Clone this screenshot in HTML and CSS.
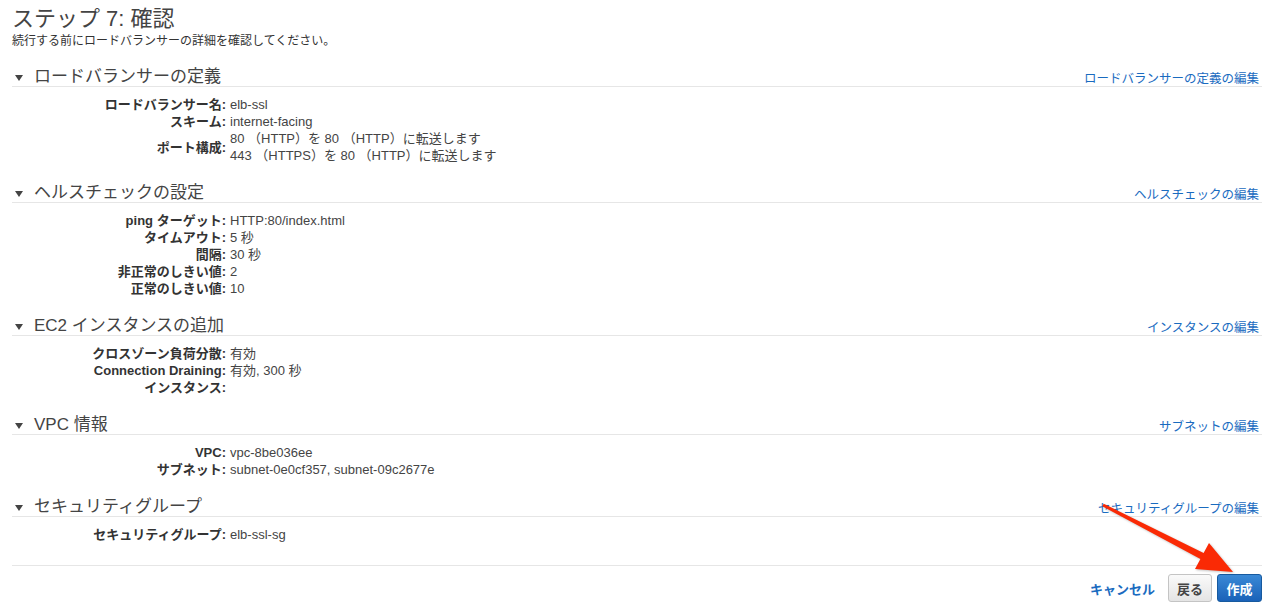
FILE: index.html
```html
<!DOCTYPE html>
<html lang="ja">
<head>
    <meta charset="UTF-8">
    <meta name="viewport" content="width=device-width, initial-scale=1.0">
    <title>ステップ 7: 確認</title>
    <link rel="stylesheet" href="styles.css">
</head>
<body>
    <div class="page">
        <h1>ステップ 7: 確認</h1>
        <p class="lead">続行する前にロードバランサーの詳細を確認してください。</p>

        <div class="section">
            <div class="section-head">
                <h2><span class="caret"></span>ロードバランサーの定義</h2>
                <a class="edit" href="#">ロードバランサーの定義の編集</a>
            </div>
            <dl class="props">
                <dt>ロードバランサー名:</dt><dd>elb-ssl</dd>
                <dt>スキーム:</dt><dd>internet-facing</dd>
                <dt>ポート構成:</dt><dd>80 （HTTP）を 80 （HTTP）に転送します<br>443 （HTTPS）を 80 （HTTP）に転送します</dd>
            </dl>
        </div>

        <div class="section">
            <div class="section-head">
                <h2><span class="caret"></span>ヘルスチェックの設定</h2>
                <a class="edit" href="#">ヘルスチェックの編集</a>
            </div>
            <dl class="props">
                <dt>ping ターゲット:</dt><dd>HTTP:80/index.html</dd>
                <dt>タイムアウト:</dt><dd>5 秒</dd>
                <dt>間隔:</dt><dd>30 秒</dd>
                <dt>非正常のしきい値:</dt><dd>2</dd>
                <dt>正常のしきい値:</dt><dd>10</dd>
            </dl>
        </div>

        <div class="section">
            <div class="section-head">
                <h2><span class="caret"></span>EC2 インスタンスの追加</h2>
                <a class="edit" href="#">インスタンスの編集</a>
            </div>
            <dl class="props">
                <dt>クロスゾーン負荷分散:</dt><dd>有効</dd>
                <dt>Connection Draining:</dt><dd>有効, 300 秒</dd>
                <dt>インスタンス:</dt><dd></dd>
            </dl>
        </div>

        <div class="section">
            <div class="section-head">
                <h2><span class="caret"></span>VPC 情報</h2>
                <a class="edit" href="#">サブネットの編集</a>
            </div>
            <dl class="props">
                <dt>VPC:</dt><dd>vpc-8be036ee</dd>
                <dt>サブネット:</dt><dd>subnet-0e0cf357, subnet-09c2677e</dd>
            </dl>
        </div>

        <div class="section">
            <div class="section-head">
                <h2><span class="caret"></span>セキュリティグループ</h2>
                <a class="edit" href="#">セキュリティグループの編集</a>
            </div>
            <dl class="props">
                <dt>セキュリティグループ:</dt><dd>elb-ssl-sg</dd>
            </dl>
        </div>

        <div class="footer">
            <a class="cancel" href="#">キャンセル</a>
            <button class="btn">戻る</button>
            <button class="btn btn-primary">作成</button>
        </div>
    </div>

    <!-- annotation arrow -->
    <svg class="arrow" width="1272" height="616" viewBox="0 0 1272 616">
        <polygon points="1103.7,503.7 1203.6,552.9 1209,543 1233,572 1195,569 1200.4,559.1 1102.3,506.3" fill="#fa2a05"/>
    </svg>
</body>
</html>
```

FILE: styles.css
```css
body {
    margin: 0;
    font-family: "Liberation Sans", "Noto Sans CJK JP", sans-serif;
    color: #444;
    background: #fff;
}

.page {
    padding: 6px 10px 0 12px;
}

h1 {
    margin: 0;
    font-size: 22px;
    font-weight: normal;
    line-height: 26px;
    color: #444;
}

.lead {
    margin: 1px 0 0;
    font-size: 12px;
    line-height: 16px;
    color: #333;
}

.section {
    margin-top: 19px;
}

.section + .section {
    margin-top: 20px;
}

.section-head {
    display: flex;
    justify-content: space-between;
    align-items: center;
    border-bottom: 1px solid #e6e6e6;
    height: 18px;
}

.section-head h2 {
    margin: 0;
    font-size: 17px;
    font-weight: normal;
    line-height: 18px;
    color: #444;
    display: flex;
    align-items: center;
}

.caret {
    width: 0;
    height: 0;
    border-left: 4.5px solid transparent;
    border-right: 4.5px solid transparent;
    border-top: 6px solid #444;
    margin: 1px 11px 0 3px;
}

.edit {
    font-size: 12.5px;
    color: #1a6bbf;
    text-decoration: none;
    padding-right: 3px;
}

.props {
    display: grid;
    grid-template-columns: 214px 1fr;
    column-gap: 4px;
    align-items: center;
    margin: 9px 0 0;
    font-size: 13px;
    line-height: 17px;
}

.props dt {
    text-align: right;
    font-weight: bold;
    color: #333;
    min-height: 17px;
}

.props dd {
    margin: 0;
    color: #444;
    min-height: 17px;
}

.footer {
    display: flex;
    justify-content: flex-end;
    align-items: center;
    gap: 5px;
    margin-top: 22px;
    border-top: 1px solid #e6e6e6;
    padding-top: 8px;
}

.cancel {
    font-size: 13px;
    font-weight: bold;
    color: #1a6bbf;
    text-decoration: none;
    margin-right: 8px;
}

.btn {
    height: 28px;
    width: 44px;
    padding: 0;
    font-family: inherit;
    font-size: 13px;
    font-weight: bold;
    color: #444;
    background: linear-gradient(#fafafa, #e4e4e4);
    border: 1px solid #c4c4c4;
    border-radius: 3px;
}

.btn-primary {
    width: 45px;
    color: #fff;
    background: linear-gradient(#3a89d6, #1a62b8);
    border-color: #175a9f;
}

.arrow {
    position: absolute;
    left: 0;
    top: 0;
    pointer-events: none;
    filter: drop-shadow(1px 1px 1px rgba(0, 0, 0, 0.25));
}
```
